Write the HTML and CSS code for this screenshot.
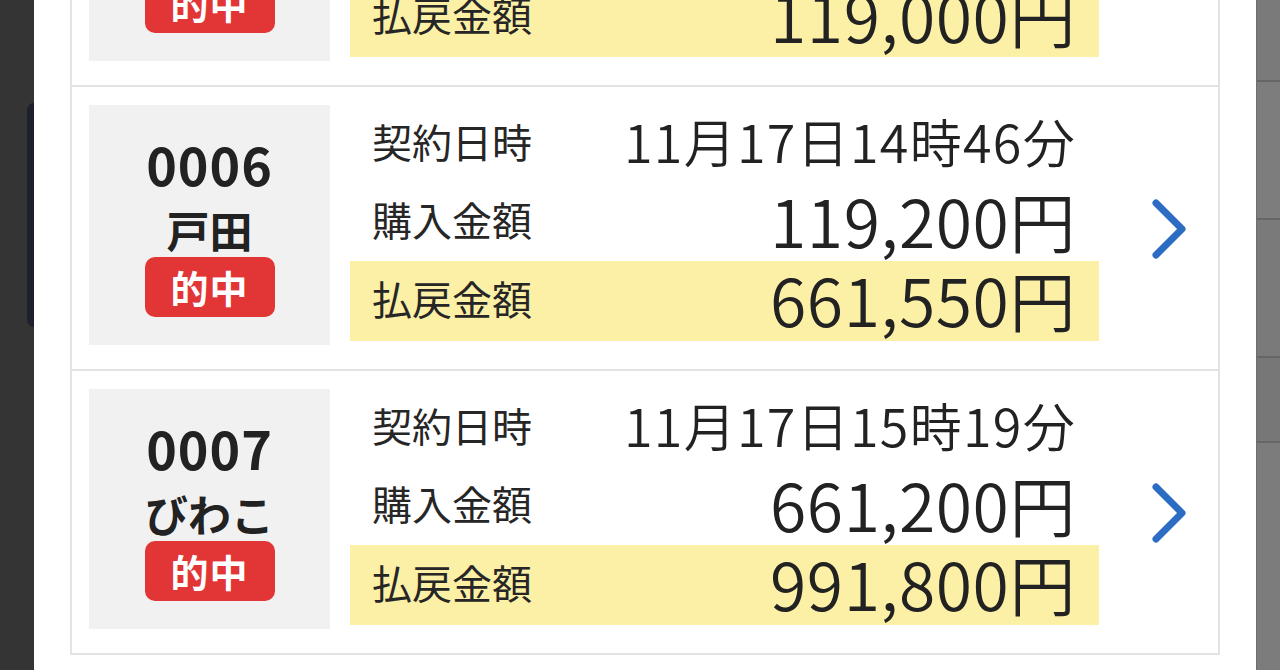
FILE: index.html
```html
<!DOCTYPE html>
<html lang="ja">
<head>
<meta charset="utf-8">
<title>投票履歴</title>
<link rel="stylesheet" href="styles.css">
</head>
<body>
<div class="page">
  <div class="side-left"><div class="side-tab"></div></div>
  <div class="modal">
    <div class="list">
      <div class="row">
        <div class="race">
          <div class="race-no">0005</div>
          <div class="race-name">平和島</div>
          <div class="badge">的中</div>
        </div>
        <div class="details">
          <div class="line"><span class="label">契約日時</span><span class="date">11月17日14時12分</span></div>
          <div class="line"><span class="label">購入金額</span><span class="amount">100,000円</span></div>
          <div class="line payout"><span class="label">払戻金額</span><span class="amount">119,000円</span></div>
        </div>
        <div class="go"><svg class="chev" viewBox="0 0 38 60" width="38" height="60"><path d="M5 4 L31 30 L5 56" /></svg></div>
      </div>
      <div class="row">
        <div class="race">
          <div class="race-no">0006</div>
          <div class="race-name">戸田</div>
          <div class="badge">的中</div>
        </div>
        <div class="details">
          <div class="line"><span class="label">契約日時</span><span class="date">11月17日14時46分</span></div>
          <div class="line"><span class="label">購入金額</span><span class="amount">119,200円</span></div>
          <div class="line payout"><span class="label">払戻金額</span><span class="amount">661,550円</span></div>
        </div>
        <div class="go"><svg class="chev" viewBox="0 0 38 60" width="38" height="60"><path d="M5 4 L31 30 L5 56" /></svg></div>
      </div>
      <div class="row">
        <div class="race">
          <div class="race-no">0007</div>
          <div class="race-name">びわこ</div>
          <div class="badge">的中</div>
        </div>
        <div class="details">
          <div class="line"><span class="label">契約日時</span><span class="date">11月17日15時19分</span></div>
          <div class="line"><span class="label">購入金額</span><span class="amount">661,200円</span></div>
          <div class="line payout"><span class="label">払戻金額</span><span class="amount">991,800円</span></div>
        </div>
        <div class="go"><svg class="chev" viewBox="0 0 38 60" width="38" height="60"><path d="M5 4 L31 30 L5 56" /></svg></div>
      </div>
    </div>
  </div>
  <div class="side-right">
    <div class="band b1"></div>
    <div class="band b2"></div>
    <div class="band b3"></div>
    <div class="band b4"></div>
    <div class="band b5"></div>
  </div>
</div>
</body>
</html>
```

FILE: styles.css
```css
html, body {
  margin: 0;
  padding: 0;
  height: 670px;
  overflow: hidden;
  background: #343434;
  font-family: "Noto Sans CJK JP", "Noto Sans", sans-serif;
  color: #222;
}

.page {
  display: flex;
  width: 1280px;
  height: 670px;
}

.side-left {
  width: 34px;
  flex: none;
  background: #343434;
  padding-top: 103px;
  box-sizing: border-box;
}

.side-tab {
  width: 7px;
  height: 224px;
  margin-left: 27px;
  background: #1e202c;
  border-radius: 8px 0 0 8px;
}

.modal {
  flex: 1;
  background: #fff;
  padding: 0 36px;
  overflow: hidden;
}

.list {
  margin-top: -199px;
  border: 2px solid #e3e3e3;
}

.row {
  display: flex;
  align-items: stretch;
  padding: 18px 0 24px 17px;
  border-bottom: 2px solid #e3e3e3;
}

.row:last-child {
  border-bottom: none;
}

.race {
  width: 241px;
  height: 240px;
  flex: none;
  background: #f1f1f1;
  display: flex;
  flex-direction: column;
  align-items: center;
  box-sizing: border-box;
  padding-top: 33px;
}

.race-no {
  font-size: 52px;
  font-weight: 700;
  line-height: 52px;
  height: 52px;
  letter-spacing: 1px;
}

.race-name {
  font-size: 43px;
  font-weight: 700;
  line-height: 44px;
  height: 44px;
  margin-top: 17px;
}

.badge {
  margin-top: 6px;
  width: 130px;
  height: 60px;
  background: #e23535;
  border-radius: 10px;
  color: #fff;
  font-size: 38px;
  font-weight: 700;
  display: flex;
  align-items: center;
  justify-content: center;
  line-height: 1;
  letter-spacing: 1px;
}

.details {
  width: 749px;
  flex: none;
  margin-left: 20px;
  display: flex;
  flex-direction: column;
}

.line {
  height: 78px;
  display: flex;
  align-items: center;
  justify-content: space-between;
  padding: 0 24px 6px 22px;
  box-sizing: border-box;
  line-height: 1;
}

.line.payout {
  height: 80px;
  background: #fcf0a6;
}

.label {
  font-size: 40px;
  font-weight: 400;
  color: #262626;
  line-height: 48px;
}

.date {
  font-size: 52px;
  font-weight: 350;
  color: #222;
  letter-spacing: 1.3px;
  line-height: 56px;
  margin-right: -1px;
}

.amount {
  font-size: 66px;
  font-weight: 350;
  color: #222;
  letter-spacing: 0.6px;
  line-height: 66px;
  margin-right: -1px;
}

.go {
  flex: 1;
  display: flex;
  align-items: center;
  padding-left: 52px;
  padding-top: 8px;
}

.chev {
  display: block;
}

.chev path {
  fill: none;
  stroke: #2c6cc3;
  stroke-width: 7;
  stroke-linecap: round;
  stroke-linejoin: round;
}

.side-right {
  width: 23px;
  flex: none;
  display: flex;
  flex-direction: column;
  background: #7b7b7b;
  border-left: 1px solid #6e6e6e;
}

.band {
  background: #7a7a7a;
  border-bottom: 2px solid #666;
}

.b1 { height: 80px; }
.b2 { height: 136px; background: #7d7d7d; }
.b3 { height: 136px; }
.b4 { height: 83px; background: #777; }
.b5 { flex: 1; border-bottom: none; background: #7c7c7c; }
```
